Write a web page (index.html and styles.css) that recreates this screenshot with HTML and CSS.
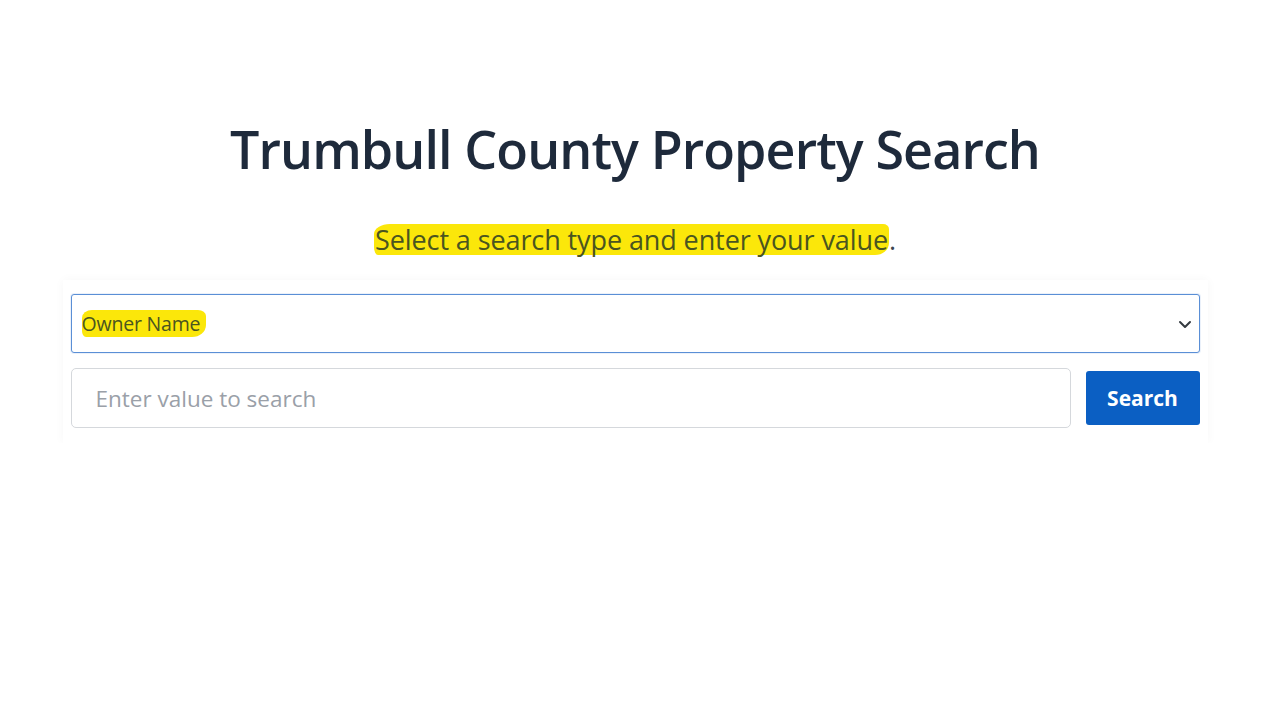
FILE: index.html
```html
<!DOCTYPE html>
<html lang="en">
<head>
<meta charset="utf-8">
<title>Trumbull County Property Search</title>
<link rel="stylesheet" href="styles.css">
</head>
<body>
<main class="page">
  <h1 class="title">Trumbull County Property Search</h1>
  <p class="subtitle"><span class="marker">Select a search type and enter your value</span>.</p>
  <section class="card">
    <div class="select">
      <span class="select-value"><span class="marker marker-small">Owner Name</span></span>
      <svg class="chevron" width="14" height="10" viewBox="0 0 14 10" aria-hidden="true">
        <path d="M2 3 L7 8 L12 3" fill="none" stroke="#343a40" stroke-width="2" stroke-linecap="round" stroke-linejoin="round"/>
      </svg>
    </div>
    <div class="search-row">
      <input class="input" type="text" placeholder="Enter value to search">
      <button class="btn" type="button">Search</button>
    </div>
  </section>
</main>
</body>
</html>
```

FILE: styles.css
```css
* { box-sizing: border-box; }

html, body {
  margin: 0;
  padding: 0;
  background: #ffffff;
}

body {
  font-family: "Open Sans", "Noto Sans", "Liberation Sans", sans-serif;
  color: #212529;
  padding-right: 10px;
}

.page {
  width: 1145px;
  margin: 0 auto;
  padding-top: 109px;
}

.title {
  margin: 0;
  text-align: center;
  font-size: 52px;
  font-weight: 600;
  letter-spacing: -0.9px;
  line-height: 80px;
  color: #1e2a3b;
}

.subtitle {
  margin: 33px 0 0;
  text-align: center;
  font-size: 27px;
  letter-spacing: -0.1px;
  line-height: 36px;
  color: #3b4650;
}

.marker {
  display: inline-block;
  background: #fbe70a;
  color: #4a5520;
  line-height: 31px;
  border-radius: 16px 6px 14px 4px / 10px 5px 12px 8px;
  padding: 0 1px;
}

.marker-small {
  line-height: 27px;
  border-radius: 10px 8px 14px 4px / 8px 6px 12px 6px;
  padding: 0 6px 0 0;
}

.card {
  margin-top: 22px;
  padding: 14px 8px 15px;
  background: #ffffff;
  box-shadow: 0 0 10px rgba(0, 0, 0, 0.035);
  display: flex;
  flex-direction: column;
  gap: 15px;
}

.select {
  height: 59px;
  border: 1px solid #5a8fd6;
  border-radius: 3px;
  box-shadow: 0 0 0 1px rgba(90, 143, 214, 0.12);
  display: flex;
  align-items: center;
  justify-content: space-between;
  padding: 0 7px 0 10px;
  background: #fff;
}

.select-value {
  font-size: 19.5px;
  letter-spacing: -0.2px;
  color: #4a5520;
  display: flex;
  align-items: center;
}

.chevron { display: block; }

.search-row {
  display: flex;
  align-items: center;
  gap: 15px;
}

.input {
  flex: 1;
  height: 60px;
  border: 1px solid #d5d8dc;
  border-radius: 5px;
  padding: 0 24px;
  font-family: inherit;
  font-size: 22.5px;
  color: #212529;
  outline: none;
}

.input::placeholder { color: #9aa0a8; }

.btn {
  width: 114px;
  height: 54px;
  border: none;
  border-radius: 3px;
  background: #0b5fc3;
  color: #ffffff;
  font-family: inherit;
  font-size: 21px;
  font-weight: 700;
}
```
